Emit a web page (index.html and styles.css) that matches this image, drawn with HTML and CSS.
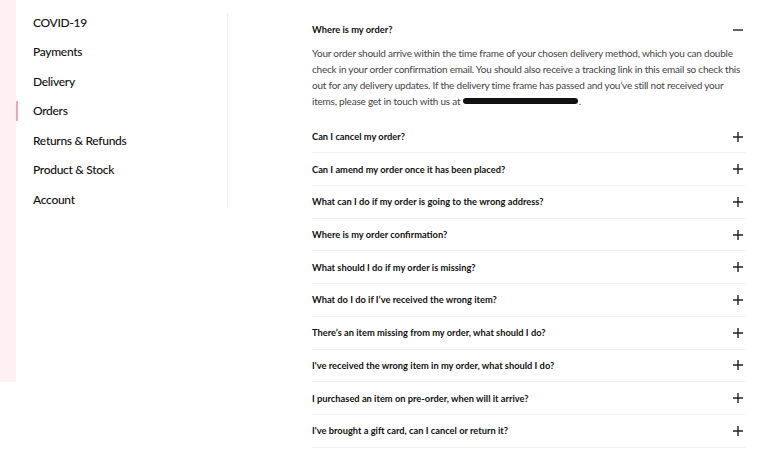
FILE: index.html
```html
<!DOCTYPE html>
<html>
<head>
<meta charset="utf-8">
<title>Help - Orders</title>
<link rel="stylesheet" href="styles.css">
</head>
<body>
<div class="page">
	<div class="strip"></div>
	<!-- help topics -->
	<div class="sidebar">
		<ul class="topics">
			<li>COVID-19</li>
			<li>Payments</li>
			<li>Delivery</li>
			<li class="active">Orders</li>
			<li>Returns &amp; Refunds</li>
			<li>Product &amp; Stock</li>
			<li>Account</li>
		</ul>
	</div>
	<!-- questions -->
	<div class="faq">
		<div class="item open">
			<div class="question">
				<span>Where is my order?</span>
				<svg class="toggle" width="12" height="12" viewBox="0 0 12 12"><path d="M1 6h10" /></svg>
			</div>
			<p class="answer">Your order should arrive within the time frame of your chosen delivery method, which you can double check in your order confirmation email. You should also receive a tracking link in this email so check this out for any delivery updates. If the delivery time frame has passed and you’ve still not received your items, please get in touch with us at <span class="redacted"></span>.</p>
		</div>
		<div class="item">
			<div class="question"><span>Can I cancel my order?</span><svg class="toggle" width="12" height="12" viewBox="0 0 12 12"><path d="M1 6h10M6 1v10" /></svg></div>
		</div>
		<div class="item">
			<div class="question"><span>Can I amend my order once it has been placed?</span><svg class="toggle" width="12" height="12" viewBox="0 0 12 12"><path d="M1 6h10M6 1v10" /></svg></div>
		</div>
		<div class="item">
			<div class="question"><span>What can I do if my order is going to the wrong address?</span><svg class="toggle" width="12" height="12" viewBox="0 0 12 12"><path d="M1 6h10M6 1v10" /></svg></div>
		</div>
		<div class="item">
			<div class="question"><span>Where is my order confirmation?</span><svg class="toggle" width="12" height="12" viewBox="0 0 12 12"><path d="M1 6h10M6 1v10" /></svg></div>
		</div>
		<div class="item">
			<div class="question"><span>What should I do if my order is missing?</span><svg class="toggle" width="12" height="12" viewBox="0 0 12 12"><path d="M1 6h10M6 1v10" /></svg></div>
		</div>
		<div class="item">
			<div class="question"><span>What do I do if I’ve received the wrong item?</span><svg class="toggle" width="12" height="12" viewBox="0 0 12 12"><path d="M1 6h10M6 1v10" /></svg></div>
		</div>
		<div class="item">
			<div class="question"><span>There’s an item missing from my order, what should I do?</span><svg class="toggle" width="12" height="12" viewBox="0 0 12 12"><path d="M1 6h10M6 1v10" /></svg></div>
		</div>
		<div class="item">
			<div class="question"><span>I've received the wrong item in my order, what should I do?</span><svg class="toggle" width="12" height="12" viewBox="0 0 12 12"><path d="M1 6h10M6 1v10" /></svg></div>
		</div>
		<div class="item">
			<div class="question"><span>I purchased an item on pre-order, when will it arrive?</span><svg class="toggle" width="12" height="12" viewBox="0 0 12 12"><path d="M1 6h10M6 1v10" /></svg></div>
		</div>
		<div class="item">
			<div class="question"><span>I've brought a gift card, can I cancel or return it?</span><svg class="toggle" width="12" height="12" viewBox="0 0 12 12"><path d="M1 6h10M6 1v10" /></svg></div>
		</div>
	</div>
</div>
</body>
</html>
```
FILE: styles.css
```css
body {
	margin: 0;
	background-color: #fff;
	font-family: "Lato", "Liberation Sans", sans-serif;
	color: #1a1a1a;
}
.page {
	display: flex;
	align-items: flex-start;
}
.strip {
	width: 16px;
	height: 382px;
	flex-shrink: 0;
	background-color: #fff0f3;
}
.sidebar {
	width: 194px;
	height: 195px;
	margin-top: 13px;
	padding-left: 17px;
	border-right: 1px solid #f0f0f0;
	flex-shrink: 0;
}
.topics {
	list-style: none;
	margin: -5.5px 0 0 0;
	padding: 0;
}
.topics li {
	position: relative;
	height: 29.5px;
	line-height: 29.5px;
	font-size: 12px;
	font-weight: 500;
	letter-spacing: -0.3px;
	color: #111;
}
/* pink marker beside the selected topic */
.topics li.active::before {
	content: "";
	position: absolute;
	left: -17px;
	top: 5px;
	width: 2px;
	height: 20px;
	background-color: #f3a6b8;
}
.faq {
	width: 433px;
	margin-left: 84px;
	padding-top: 14px;
}
.question {
	display: flex;
	justify-content: space-between;
	align-items: center;
	height: 31.7px;
	font-size: 9.3px;
	font-weight: 700;
	color: #111;
}
.toggle {
	margin-right: 1px;
	stroke: #222;
	stroke-width: 1.4;
	fill: none;
}
.item {
	border-bottom: 1px solid #efefef;
}
.item.open {
	border-bottom: none;
	padding-bottom: 12px;
}
.answer {
	margin: -1px 0 0 0;
	font-size: 10px;
	letter-spacing: -0.22px;
	line-height: 16px;
	color: #444;
}
.redacted {
	display: inline-block;
	width: 115px;
	height: 6px;
	margin-right: 1px;
	border-radius: 3px;
	background-color: #111;
	vertical-align: 1px;
}
```
